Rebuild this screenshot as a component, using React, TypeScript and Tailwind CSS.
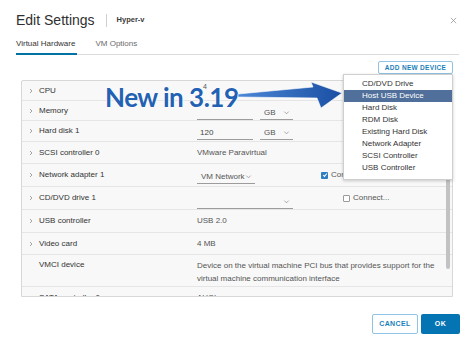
import React from "react"

const font = { fontFamily: '"Liberation Sans", Arial, sans-serif' }

function Chevron({ className = "" }: { className?: string }) {
  return (
    <svg viewBox="0 0 8 8" className={className} fill="none" stroke="currentColor" strokeWidth="1">
      <path d="M1.5 3 L4 5.5 L6.5 3" />
    </svg>
  )
}

function RowChevron() {
  return (
    <svg viewBox="0 0 6 6" className="h-[6px] w-[6px] text-[#9a9a9a]" fill="none" stroke="currentColor" strokeWidth="0.9">
      <path d="M2 1 L4 3 L2 5" />
    </svg>
  )
}

function Field({ width, value }: { width: string; value?: string }) {
  return (
    <div className={`${width} h-[13px] border-b border-[#9c9c9c] pl-[3px] text-[8px] leading-[12px] text-[#444]`}>
      {value}
    </div>
  )
}

function Select({ width, value }: { width: string; value?: string }) {
  return (
    <div className={`${width} flex h-[13px] items-center justify-between border-b border-[#9c9c9c] pl-[4px] pr-[3px] text-[8px] text-[#555]`}>
      <span>{value}</span>
      <Chevron className="h-[7px] w-[7px] text-[#9a9a9a]" />
    </div>
  )
}

function Check({ checked }: { checked?: boolean }) {
  return checked ? (
    <span className="flex h-[7px] w-[7px] items-center justify-center rounded-[1px] bg-[#2d7fc1]">
      <svg viewBox="0 0 8 8" className="h-[6px] w-[6px]" fill="none" stroke="#fff" strokeWidth="1.4">
        <path d="M1.5 4 L3.3 5.8 L6.5 2" />
      </svg>
    </span>
  ) : (
    <span className="h-[7px] w-[7px] rounded-[1px] border border-[#9a9a9a] bg-white" />
  )
}

type Row = { label: string; h: string; chevron?: boolean; value?: React.ReactNode; align?: string }

const rows: Row[] = [
  { label: "CPU", h: "h-[20px]", chevron: true, value: <span className="-mt-[7px] ml-[6px] text-[7px] text-[#555]">4</span> },
  {
    label: "Memory",
    h: "h-[20px]",
    chevron: true,
    value: (
      <div className="mt-[5px] flex gap-[7px]">
        <Field width="w-[56px]" />
        <Select width="w-[33px]" value="GB" />
      </div>
    ),
  },
  {
    label: "Hard disk 1",
    h: "h-[21px]",
    chevron: true,
    value: (
      <div className="mt-[4px] flex gap-[7px]">
        <Field width="w-[56px]" value="120" />
        <Select width="w-[33px]" value="GB" />
      </div>
    ),
  },
  { label: "SCSI controller 0", h: "h-[22px]", chevron: true, value: "VMware Paravirtual" },
  {
    label: "Network adapter 1",
    h: "h-[23px]",
    chevron: true,
    value: (
      <div className="flex items-center">
        <div className="mt-[4px]">
          <Select width="w-[58px]" value="VM Network" />
        </div>
        <span className="ml-[66px] flex items-center gap-[3px]">
          <Check checked />
          <span>Connect...</span>
        </span>
      </div>
    ),
  },
  {
    label: "CD/DVD drive 1",
    h: "h-[23px]",
    chevron: true,
    value: (
      <div className="flex items-center">
        <div className="mt-[8px]">
          <Select width="w-[96px]" />
        </div>
        <span className="ml-[50px] flex items-center gap-[3px]">
          <Check />
          <span>Connect...</span>
        </span>
      </div>
    ),
  },
  { label: "USB controller", h: "h-[23px]", chevron: true, value: "USB 2.0" },
  { label: "Video card", h: "h-[22px]", chevron: true, value: "4 MB" },
  {
    label: "VMCI device",
    h: "h-[32px]",
    align: "items-start pt-[4px]",
    value: (
      <div className="leading-[13px]">
        Device on the virtual machine PCI bus that provides support for the
        <br />
        virtual machine communication interface
      </div>
    ),
  },
  { label: "SATA controller 0", h: "h-[22px]", chevron: true, value: "AHCI", align: "items-start pt-[5px]" },
]

const menu = [
  "CD/DVD Drive",
  "Host USB Device",
  "Hard Disk",
  "RDM Disk",
  "Existing Hard Disk",
  "Network Adapter",
  "SCSI Controller",
  "USB Controller",
]

export default function App() {
  return (
    <div className="relative h-[347px] w-[474px] overflow-hidden bg-white text-[#333]" style={font}>
      <header className="flex items-center justify-between pl-[16px] pr-[17px] pt-[11px]">
        <div className="flex items-center">
          <h1 className="text-[14px] leading-[18px] text-[#2f2f2f]">Edit Settings</h1>
          <span className="ml-[11px] h-[13px] w-px bg-[#cfcfcf]" />
          <span className="ml-[10px] text-[7.5px] font-bold text-[#3a3a3a]">Hyper-v</span>
        </div>
        <svg viewBox="0 0 8 8" className="h-[7px] w-[7px]" fill="none" stroke="#8a8a8a" strokeWidth="0.8">
          <path d="M1 1 L7 7 M7 1 L1 7" />
        </svg>
      </header>

      <nav className="ml-[16px] mr-[15px] mt-[9px] flex gap-[18px] border-b border-[#dcdcdc] text-[8px]">
        <div className="-mb-px border-b-2 border-[#0072a3] pb-[3px] pr-[2px] text-[#333]">Virtual Hardware</div>
        <div className="pb-[3px] text-[#6a6a6a]">VM Options</div>
      </nav>

      <div className="mr-[21px] mt-[6px] flex justify-end">
        <button className="flex h-[13px] w-[75px] items-center justify-center rounded-[2px] border border-[#8fc3e3] text-[6.5px] font-bold tracking-[0.3px] text-[#1a7fb9]">
          ADD NEW DEVICE
        </button>
      </div>

      <div className="relative ml-[21px] mt-[6px] h-[217px] w-[432px] overflow-hidden rounded-t-[2px] border border-[#d8d8d8] bg-[#f8f8f8] text-[8px]">
        {rows.map((r) => (
          <div key={r.label} className={`flex ${r.h} ${r.align ?? "items-center"} border-b border-[#e5e5e5]`}>
            <div className="flex w-[175px] items-center gap-[5px] pl-[6px] text-[#333]">
              <span className="flex w-[6px] justify-center">{r.chevron && <RowChevron />}</span>
              <span>{r.label}</span>
            </div>
            <div className="flex flex-1 text-[#555]">{r.value}</div>
          </div>
        ))}
        <div className="absolute right-[2px] top-[6px] h-[182px] w-[4px] rounded-full bg-[#c2c2c2]" />
      </div>

      <div className="mr-[14px] mt-[17px] flex justify-end gap-[3px]">
        <button className="flex h-[20px] w-[46px] items-center justify-center rounded-[2px] border border-[#8fc3e3] text-[7px] font-bold tracking-[0.4px] text-[#1a7fb9]">
          CANCEL
        </button>
        <button className="flex h-[20px] w-[39px] items-center justify-center rounded-[2px] bg-[#0474b2] text-[7px] font-bold tracking-[0.4px] text-white">
          OK
        </button>
      </div>

      {/* annotation */}
      <div className="absolute left-[105px] top-[82px] text-[26px] font-bold leading-[30px] tracking-[-0.5px] text-[#2361b3] [font-family:Lato,sans-serif] [text-shadow:0_0_2px_#fff,0_0_2px_#fff,0_0_1px_#fff]">
        New in 3.19
      </div>
      <svg viewBox="0 0 110 34" className="absolute left-[236px] top-[78px] h-[34px] w-[110px]">
        <defs>
          <linearGradient id="arr" x1="0" y1="0" x2="1" y2="0">
            <stop offset="0" stopColor="#4b87d6" />
            <stop offset="1" stopColor="#1a4fa3" />
          </linearGradient>
        </defs>
        <polygon points="2,16 77,9 75,4 106,15 85,30 81,20 2,19" fill="url(#arr)" stroke="#fff" strokeWidth="0.6" />
      </svg>

      {/* dropdown */}
      <div className="absolute left-[343px] top-[74px] w-[110px] border border-[#cfcfcf] bg-white pb-[5px] pt-[3px] text-[8px] text-[#333] shadow-[0_1px_3px_rgba(0,0,0,0.2)]">
        {menu.map((m) => (
          <div
            key={m}
            className={`h-[12px] pl-[18px] leading-[12px] ${m === "Host USB Device" ? "bg-[#506f9a] text-white" : ""}`}
          >
            {m}
          </div>
        ))}
      </div>
    </div>
  )
}
